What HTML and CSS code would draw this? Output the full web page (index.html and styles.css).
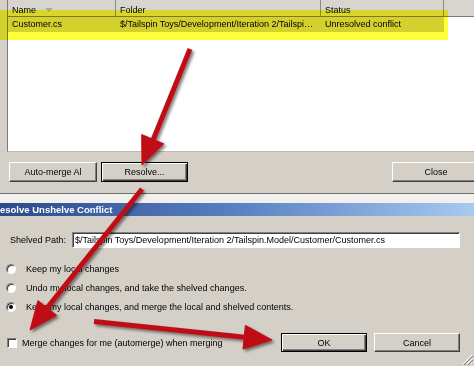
FILE: index.html
```html
<!DOCTYPE html>
<html lang="en">
<head>
  <meta charset="UTF-8">
  <title>Resolve Unshelve Conflict</title>
  <link rel="stylesheet" href="styles.css">
</head>
<body>

  <!-- Fenêtre du haut : liste des conflits -->
  <div class="window">
    <div class="list">
      <div class="list-head">
        <div class="col c-name">Name <span class="sort"></span></div>
        <div class="col c-folder">Folder</div>
        <div class="col c-status">Status</div>
        <div class="col c-fill"></div>
      </div>
      <div class="list-row selected">
        <div class="col c-name">Customer.cs</div>
        <div class="col c-folder">$/Tailspin Toys/Development/Iteration 2/Tailspi…</div>
        <div class="col c-status">Unresolved conflict</div>
      </div>
    </div>

    <div class="buttons">
      <button class="btn">Auto-merge Al</button>
      <button class="btn default">Resolve...</button>
      <button class="btn close">Close</button>
    </div>
  </div>

  <!-- Boîte de dialogue du bas -->
  <div class="dialog">
    <div class="strip"></div>
    <div class="titlebar">esolve Unshelve Conflict</div>

    <div class="dialog-body">
      <div class="path-row">
        <span class="path-label">Shelved Path:</span>
        <div class="path-input">$/Tailspin Toys/Development/Iteration 2/Tailspin.Model/Customer/Customer.cs</div>
      </div>

      <div class="options">
        <div class="option"><span class="radio"></span>Keep my local changes</div>
        <div class="option"><span class="radio"></span>Undo my local changes, and take the shelved changes.</div>
        <div class="option"><span class="radio checked"></span>Keep my local changes, and merge the local and shelved contents.</div>
      </div>

      <div class="bottom-row">
        <span class="checkbox"></span>
        <span class="check-label">Merge changes for me (automerge) when merging</span>
        <button class="btn default ok">OK</button>
        <button class="btn cancel">Cancel</button>
      </div>
    </div>
  </div>

  <!-- Surlignage jaune et flèches rouges par-dessus la capture -->
  <div class="highlight"></div>

  <svg class="arrows" width="474" height="366" viewBox="0 0 474 366">
    <defs>
      <filter id="ombre" x="-20%" y="-20%" width="140%" height="140%">
        <feDropShadow dx="2" dy="2" stdDeviation="1.6" flood-color="#000" flood-opacity="0.5"/>
      </filter>
    </defs>
    <g filter="url(#ombre)" fill="#bf0f19" stroke="#bf0f19" stroke-linejoin="round">
      <line x1="190" y1="49" x2="153" y2="140" stroke-width="5"/>
      <polygon points="142,165 163.9,143.8 141.7,134.6" stroke-width="1"/>

      <line x1="142" y1="189" x2="47" y2="308" stroke-width="5"/>
      <polygon points="30,330 56.7,315.4 37.9,300.6" stroke-width="1"/>

      <line x1="94" y1="321.5" x2="245" y2="337.2" stroke-width="5"/>
      <polygon points="272,340 243,349.1 245.4,325.3" stroke-width="1"/>
    </g>
  </svg>

  <!-- Poignée de redimensionnement -->
  <svg class="grip" width="12" height="12" viewBox="0 0 12 12">
    <path d="M11 2 L2 11 M11 6 L6 11 M11 10 L10 11" stroke="#fff" stroke-width="1"/>
    <path d="M12 3 L3 12 M12 7 L7 12" stroke="#808080" stroke-width="1"/>
  </svg>

</body>
</html>
```

FILE: styles.css
```css
/* Base de la page */
body {
  margin: 0;
  width: 474px;
  height: 366px;
  overflow: hidden;
  position: relative;
  background: #d4d0c8;
  font-family: "Liberation Sans", Arial, sans-serif;
  font-size: 9px;
  color: #000;
}

/* Fenêtre du haut */
.window {
  height: 193px;
  border-bottom: 1px solid #6f6f6f;
}

.list {
  margin-left: 7px;
  height: 151px;
  background: #fff;
  border-left: 1px solid #7a7a7a;
  border-bottom: 1px solid #bdb9b1;
}

.list-head {
  display: flex;
  height: 17px;
  background: #d8d5ce;
  border-bottom: 1px solid #7a7a7a;
  box-sizing: border-box;
}

.col {
  box-sizing: border-box;
  padding-left: 4px;
  white-space: nowrap;
  overflow: hidden;
}

.list-head .col {
  border-right: 1px solid #8a8a8a;
  padding-top: 5px;
  line-height: 11px;
  position: relative;
}

.c-name { width: 108px; }
.c-folder { width: 205px; }
.c-status { width: 123px; }
.list-head .c-fill { flex: 1; border-right: none; }

.sort {
  position: absolute;
  left: 37px;
  top: 8px;
  border-left: 4px solid transparent;
  border-right: 4px solid transparent;
  border-top: 4px solid #a9a9a9;
}

.list-row {
  display: flex;
  width: 436px;
  height: 15px;
  line-height: 15px;
}

.list-row.selected {
  background: #d4d0c8;
}

/* Boutons */
.buttons {
  display: flex;
  gap: 4px;
  padding: 10px 0 0 9px;
}

.btn {
  height: 20px;
  width: 88px;
  box-sizing: border-box;
  padding: 0;
  background: #d4d0c8;
  border: 1px solid;
  border-color: #fff #404040 #404040 #fff;
  box-shadow: inset -1px -1px #808080;
  font: inherit;
  color: #000;
}

.btn.default {
  border-color: #000;
  box-shadow: inset 1px 1px #fff, inset -1px -1px #404040, inset -2px -2px #808080;
}

.buttons .default { width: 87px; }
.btn.close { margin-left: auto; margin-right: -6px; }

/* Boîte de dialogue */
.strip {
  height: 9px;
  background: #f1f0ec;
}

.titlebar {
  height: 13px;
  line-height: 13px;
  background: linear-gradient(to right, #2a4a8c, #5a80c2 50%, #a6caf0);
  color: #fff;
  font-weight: bold;
  font-size: 9.5px;
  white-space: nowrap;
}

.dialog-body {
  padding: 16px 14px 0 10px;
}

.path-row {
  display: flex;
  align-items: center;
  height: 16px;
}

.path-label {
  width: 62px;
}

.path-input {
  flex: 1;
  height: 16px;
  line-height: 14px;
  box-sizing: border-box;
  padding-left: 2px;
  background: #fff;
  border: 1px solid;
  border-color: #808080 #fff #fff #808080;
  box-shadow: inset 1px 1px #404040;
  white-space: nowrap;
  overflow: hidden;
}

.options {
  margin: 11px 0 0 -4px;
}

.option {
  display: flex;
  align-items: center;
  height: 19px;
}

.radio {
  width: 10px;
  height: 10px;
  box-sizing: border-box;
  margin-right: 10px;
  border-radius: 50%;
  background: #fff;
  border: 1px solid;
  border-color: #808080 #fff #fff #808080;
  box-shadow: inset 1px 1px #404040;
  position: relative;
}

.radio.checked::after {
  content: "";
  position: absolute;
  left: 2px;
  top: 2px;
  width: 4px;
  height: 4px;
  border-radius: 50%;
  background: #000;
}

.bottom-row {
  display: flex;
  align-items: center;
  margin: 17px 0 0 -3px;
  height: 19px;
}

.checkbox {
  width: 10px;
  height: 10px;
  box-sizing: border-box;
  margin-right: 5px;
  background: #fff;
  border: 1px solid;
  border-color: #808080 #fff #fff #808080;
  box-shadow: inset 1px 1px #404040;
}

.check-label {
  flex: 1;
}

.bottom-row .btn {
  width: 86px;
  height: 19px;
}

.btn.cancel { margin-left: 7px; }

/* Surlignage et flèches */
.highlight {
  position: absolute;
  left: 0;
  top: 10px;
  width: 448px;
  height: 30px;
  background: #ffff3a;
  mix-blend-mode: multiply;
}

.arrows {
  position: absolute;
  left: 0;
  top: 0;
  pointer-events: none;
}

.grip {
  position: absolute;
  right: 1px;
  bottom: 1px;
}
```
